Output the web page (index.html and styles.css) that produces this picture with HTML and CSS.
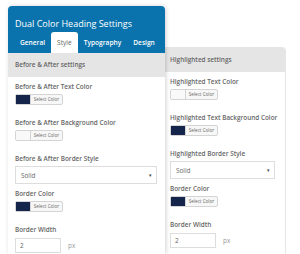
FILE: index.html
```html
<!DOCTYPE html>
<html>
<head>
    <meta charset="UTF-8">
    <title>Dual Color Heading Settings</title>
    <link rel="stylesheet" href="styles.css">
</head>
<body>
    <div class="panel panel-main">
        <div class="panel-head">
            <div class="panel-title">Dual Color Heading Settings</div>
            <ul class="tabs">
                <li>General</li>
                <li class="active">Style</li>
                <li>Typography</li>
                <li>Design</li>
            </ul>
        </div>
        <div class="section-title">Before &amp; After settings</div>
        <div class="panel-body">
            <div class="field">
                <label>Before &amp; After Text Color</label>
                <div class="color-pick"><span class="swatch dark"></span><span class="pick-btn">Select Color</span></div>
            </div>
            <div class="field">
                <label>Before &amp; After Background Color</label>
                <div class="color-pick"><span class="swatch light"></span><span class="pick-btn">Select Color</span></div>
            </div>
            <div class="field field-select">
                <label>Before &amp; After Border Style</label>
                <div class="select"><span>Solid</span><span class="arrow">&#9662;</span></div>
            </div>
            <div class="field">
                <label>Border Color</label>
                <div class="color-pick"><span class="swatch dark"></span><span class="pick-btn">Select Color</span></div>
            </div>
            <div class="field">
                <label>Border Width</label>
                <div class="width-row"><span class="num">2</span><span class="unit">px</span></div>
            </div>
        </div>
    </div>
    <div class="panel panel-side">
        <div class="section-title">Highlighted settings</div>
        <div class="panel-body">
            <div class="field">
                <label>Highlighted Text Color</label>
                <div class="color-pick"><span class="swatch light"></span><span class="pick-btn">Select Color</span></div>
            </div>
            <div class="field">
                <label>Highlighted Text Background Color</label>
                <div class="color-pick"><span class="swatch dark"></span><span class="pick-btn">Select Color</span></div>
            </div>
            <div class="field field-select">
                <label>Highlighted Border Style</label>
                <div class="select"><span>Solid</span><span class="arrow">&#9662;</span></div>
            </div>
            <div class="field">
                <label>Border Color</label>
                <div class="color-pick"><span class="swatch dark"></span><span class="pick-btn">Select Color</span></div>
            </div>
            <div class="field">
                <label>Border Width</label>
                <div class="width-row"><span class="num">2</span><span class="unit">px</span></div>
            </div>
        </div>
    </div>
</body>
</html>
```
FILE: styles.css
```css
body {
    margin: 0;
    padding: 0 0 0 8px;
    height: 254px;
    overflow: hidden;
    background-color: #ffffff;
    font-family: "Open Sans", sans-serif;
    display: flex;
    align-items: stretch;
}
.panel {
    background-color: #ffffff;
    overflow: hidden;
}
.panel-main {
    width: 157px;
    margin-top: 6px;
    border-radius: 4px 4px 0 0;
    position: relative;
    z-index: 1;
    overflow: visible;
    box-shadow: 1px 0 4px rgba(0, 0, 0, 0.18);
}
.panel-side {
    width: 120px;
    margin-top: 47px;
    border-right: 1px solid #e6e6e6;
    border-radius: 0 4px 0 0;
}
.panel-head {
    background-color: #0a73ad;
    border-radius: 4px 4px 0 0;
    height: 47px;
    padding: 0 0 0 6px;
    box-sizing: border-box;
    display: flex;
    flex-direction: column;
    justify-content: space-between;
}
.panel-title {
    color: #ffffff;
    font-size: 9px;
    padding: 12px 0 0 1px;
    line-height: 12px;
}
.tabs {
    list-style-type: none;
    margin: 0;
    padding: 0;
    display: flex;
}
.tabs li {
    color: #ffffff;
    font-size: 6.6px;
    font-weight: 600;
    padding: 0 6px;
    height: 21px;
    line-height: 21px;
    border-radius: 3px 3px 0 0;
}
.tabs li.active {
    background-color: #ffffff;
    color: #666666;
    font-weight: 400;
}
.section-title {
    background-color: #e5e5e5;
    color: #666666;
    font-size: 6.4px;
    font-weight: 600;
    height: 24px;
    line-height: 24px;
    padding-left: 7px;
}
.panel-side .section-title {
    height: 25px;
    line-height: 25px;
    padding-left: 5px;
}
.panel-body {
    padding: 5px 8px 0 7px;
}
.panel-side .panel-body {
    padding: 5px 10px 0 5px;
}
.field {
    margin-bottom: 13px;
}
.field-select {
    margin-bottom: 5px;
}
label {
    display: block;
    color: #666666;
    font-size: 6.4px;
    font-weight: 600;
    line-height: 10px;
    margin-bottom: 2px;
    white-space: nowrap;
}
.color-pick {
    display: flex;
    width: 48px;
    height: 11px;
    border: 1px solid #d4d4d4;
    border-radius: 2px;
    box-sizing: border-box;
    background-color: #f7f7f7;
}
.swatch {
    width: 14px;
    height: 100%;
    border-right: 1px solid #d4d4d4;
}
.swatch.dark {
    background-color: #15244a;
}
.swatch.light {
    background-color: #f9f9f9;
}
.pick-btn {
    flex: 1;
    text-align: center;
    color: #666666;
    font-size: 4.6px;
    line-height: 9px;
}
.select {
    display: flex;
    justify-content: space-between;
    align-items: center;
    height: 18px;
    border: 1px solid #dddddd;
    box-sizing: border-box;
    padding: 0 4px 0 5px;
    color: #666666;
    font-size: 6.4px;
}
.arrow {
    font-size: 5px;
    color: #444444;
}
.width-row {
    display: flex;
    align-items: center;
    margin-top: 3px;
}
.num {
    width: 46px;
    height: 15px;
    border: 1px solid #dddddd;
    box-sizing: border-box;
    padding-left: 4px;
    line-height: 13px;
    color: #666666;
    font-size: 6.4px;
}
.unit {
    margin-left: 7px;
    color: #999999;
    font-size: 6.4px;
}
```
